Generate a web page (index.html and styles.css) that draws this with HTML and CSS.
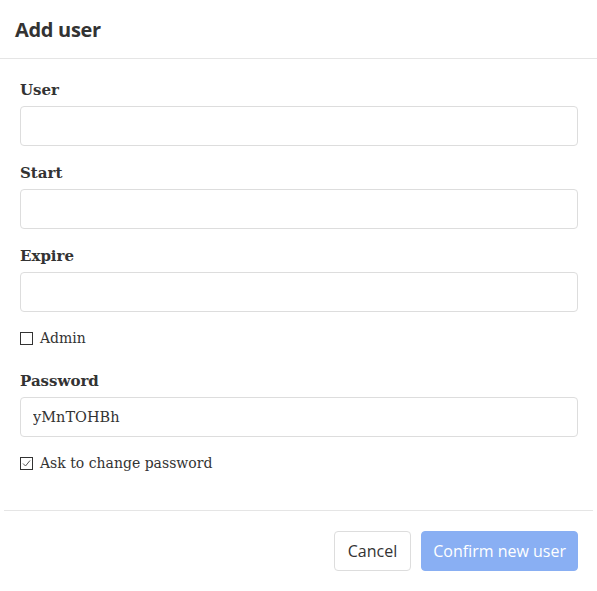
FILE: index.html
```html
<!DOCTYPE html>
<html>
<head>
<meta charset="utf-8">
<link rel="stylesheet" href="styles.css">
</head>
<body>
<div class="modal">
  <div class="modal-header">
    <h1 class="title">Add user</h1>
  </div>
  <div class="modal-body">
    <div class="group">
      <label class="label">User</label>
      <input class="input" type="text" value="">
    </div>
    <div class="group">
      <label class="label">Start</label>
      <input class="input" type="text" value="">
    </div>
    <div class="group">
      <label class="label">Expire</label>
      <input class="input" type="text" value="">
    </div>
    <div class="check-row check-admin">
      <svg class="box" width="13" height="13" viewBox="0 0 13 13"><rect x="0.5" y="0.5" width="12" height="12" fill="#fff" stroke="#333"/></svg>
      <span>Admin</span>
    </div>
    <div class="group">
      <label class="label">Password</label>
      <input class="input" type="text" value="yMnTOHBh">
    </div>
    <div class="check-row">
      <svg class="box" width="13" height="13" viewBox="0 0 13 13"><rect x="0.5" y="0.5" width="12" height="12" fill="#fff" stroke="#333"/><path d="M3 6.5 L5.5 9 L10 3.5" fill="none" stroke="#555" stroke-width="1"/></svg>
      <span>Ask to change password</span>
    </div>
  </div>
  <div class="modal-footer">
    <button class="btn btn-default">Cancel</button>
    <button class="btn btn-primary">Confirm new user</button>
  </div>
</div>
</body>
</html>
```

FILE: styles.css
```css
html, body {
  margin: 0;
  padding: 0;
  background: #fff;
  overflow: hidden;
}
body {
  font-family: "DejaVu Serif", Georgia, serif;
  color: #333;
}
.modal {
  width: 597px;
}
.modal-header {
  height: 59px;
  border-bottom: 1px solid #e5e5e5;
  box-sizing: border-box;
  padding: 0 15px;
  display: flex;
  align-items: center;
}
.title {
  margin: 0;
  font-family: "Open Sans", sans-serif;
  font-weight: 700;
  font-size: 20px;
  color: #333;
  letter-spacing: -0.3px;
}
.modal-body {
  padding: 21px 19px 21px 20px;
}
.group {
  margin-bottom: 17px;
}
.group:has(+ .check-row) {
  margin-bottom: 16px;
}
.label {
  display: block;
  font-weight: bold;
  font-size: 15px;
  line-height: 20px;
  margin-bottom: 6px;
}
.input {
  display: block;
  box-sizing: border-box;
  width: 100%;
  height: 40px;
  border: 1px solid #ddd;
  border-radius: 4px;
  padding: 0 12px;
  font-family: "DejaVu Serif", Georgia, serif;
  font-size: 14.5px;
  color: #333;
  outline: none;
}
.check-row {
  display: flex;
  align-items: center;
  gap: 7px;
  height: 20px;
  font-size: 14px;
  line-height: 20px;
  margin-bottom: 16px;
}
.check-admin {
  margin-bottom: 23px;
}
.box {
  display: block;
  flex: none;
}
.modal-footer {
  margin: 0 4px;
  border-top: 1px solid #e5e5e5;
  padding: 20px 15px 20px 0;
  display: flex;
  justify-content: flex-end;
  gap: 10px;
}
.btn {
  height: 40px;
  border-radius: 4px;
  font-family: "Open Sans", sans-serif;
  font-size: 16px;
  cursor: pointer;
}
.btn-default {
  background: #fff;
  border: 1px solid #ddd;
  color: #333;
  padding: 0 13px;
}
.btn-primary {
  background: #89aff3;
  border: 1px solid #89aff3;
  color: #fff;
  padding: 0 11px;
}
```
